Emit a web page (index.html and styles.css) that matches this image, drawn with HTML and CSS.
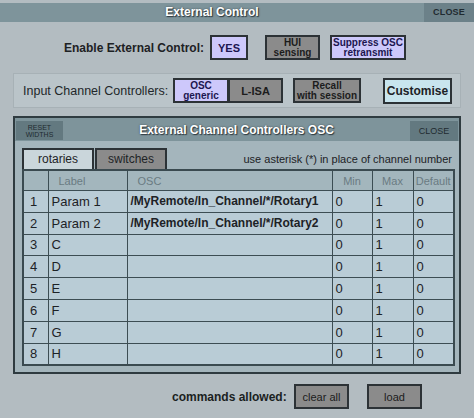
FILE: index.html
```html
<!DOCTYPE html>
<html>
<head>
<meta charset="utf-8">
<link rel="stylesheet" href="styles.css">
</head>
<body>
<div class="win">
  <div class="titlebar">
    <div class="title">External Control</div>
    <div class="close">CLOSE</div>
  </div>

  <div class="enable-row">
    <span class="enable-label">Enable External Control:</span>
    <div class="btn lav yes">YES</div>
    <div class="btn grey hui">HUI<br>sensing</div>
    <div class="btn lav sup">Suppress OSC<br>retransmit</div>
  </div>

  <div class="icc">
    <span class="icc-label">Input Channel Controllers:</span>
    <div class="seg">
      <div class="btn lav osc">OSC<br>generic</div>
      <div class="btn grey lisa">L-ISA</div>
    </div>
    <div class="btn grey recall">Recall<br>with session</div>
    <div class="btn cyan cust">Customise</div>
  </div>

  <div class="panel">
    <div class="ptitlebar">
      <div class="reset">RESET<br>WIDTHS</div>
      <div class="ptitle">External Channel Controllers OSC</div>
      <div class="pclose">CLOSE</div>
    </div>
    <div class="tabrow">
      <div class="tabs">
        <div class="tab on">rotaries</div>
        <div class="tab off">switches</div>
      </div>
      <div class="hint">use asterisk (*) in place of channel number</div>
    </div>
    <table class="grid">
      <colgroup>
        <col class="c-n"><col class="c-l"><col class="c-o"><col class="c-mi"><col class="c-ma"><col class="c-d">
      </colgroup>
      <tr class="hdr"><th></th><th class="lh">Label</th><th class="lh">OSC</th><th>Min</th><th>Max</th><th>Default</th></tr>
      <tr><td>1</td><td>Param 1</td><td class="osc-path">/MyRemote/In_Channel/*/Rotary1</td><td>0</td><td>1</td><td>0</td></tr>
      <tr><td>2</td><td>Param 2</td><td class="osc-path">/MyRemote/In_Channel/*/Rotary2</td><td>0</td><td>1</td><td>0</td></tr>
      <tr><td>3</td><td>C</td><td></td><td>0</td><td>1</td><td>0</td></tr>
      <tr><td>4</td><td>D</td><td></td><td>0</td><td>1</td><td>0</td></tr>
      <tr><td>5</td><td>E</td><td></td><td>0</td><td>1</td><td>0</td></tr>
      <tr><td>6</td><td>F</td><td></td><td>0</td><td>1</td><td>0</td></tr>
      <tr><td>7</td><td>G</td><td></td><td>0</td><td>1</td><td>0</td></tr>
      <tr><td>8</td><td>H</td><td></td><td>0</td><td>1</td><td>0</td></tr>
    </table>
  </div>

  <div class="cmd-row">
    <span class="cmd-label">commands allowed:</span>
    <div class="btn grey clear">clear all</div>
    <div class="btn grey load">load</div>
  </div>
</div>
</body>
</html>
```
FILE: styles.css
```css
html, body {
  margin: 0;
  padding: 0;
}
body {
  width: 474px;
  height: 418px;
  overflow: hidden;
  background: #b3bcc1;
  font-family: "Liberation Sans", Arial, sans-serif;
  color: #1b1f22;
}
.win {
  padding-top: 3px;
}
.titlebar {
  height: 19px;
  background: #7e949b;
  display: flex;
  align-items: stretch;
}
.title {
  flex: 1;
  text-align: center;
  color: #ffffff;
  font-weight: bold;
  font-size: 12px;
  line-height: 19px;
  text-shadow: 1px 1px 1px #2e3a40, 0 0 2px #3d4a50;
}
.close {
  width: 50px;
  background: #6c8189;
  color: #1f2a30;
  font-size: 9px;
  font-weight: bold;
  line-height: 19px;
  text-align: center;
  letter-spacing: 0.2px;
}
.btn {
  box-sizing: border-box;
  flex-shrink: 0;
  border: 2px solid #2c3236;
  display: flex;
  align-items: center;
  justify-content: center;
  text-align: center;
  font-weight: bold;
  font-size: 10px;
  line-height: 10px;
  color: #1d2226;
  white-space: nowrap;
}
.lav { background: #cdc8fb; color: #1c1650; }
.grey { background: #8b8b8b; color: #1c1c1c; }
.cyan { background: #c8e5ee; }

.enable-row {
  display: flex;
  align-items: center;
  margin-top: 13px;
  height: 25px;
}
.enable-label {
  box-sizing: border-box;
  flex-shrink: 0;
  width: 210px;
  padding-right: 6px;
  text-align: right;
  white-space: nowrap;
  font-weight: bold;
  font-size: 12px;
  color: #1d2124;
}
.yes { width: 38px; height: 25px; font-size: 11px; }
.hui { width: 55px; height: 25px; margin-left: 17px; }
.sup { width: 76px; height: 25px; margin-left: 10px; }

.icc {
  margin: 13px 13px 0 13px;
  height: 35px;
  box-sizing: border-box;
  border: 1px solid #a7b1b6;
  background: #bac4c9;
  display: flex;
  align-items: center;
}
.icc-label {
  flex-shrink: 0;
  margin-left: 9px;
  width: 150px;
  white-space: nowrap;
  font-size: 12.5px;
  color: #22272a;
}
.seg { display: flex; flex-shrink: 0; }
.osc { width: 56px; height: 25px; }
.lisa { width: 55px; height: 25px; margin-left: -1px; font-size: 11px; }
.recall { width: 68px; height: 25px; margin-left: 10px; }
.cust { width: 69px; height: 26px; margin-left: 22px; font-size: 12px; }

.panel {
  margin: 8px 13px 0 13px;
  height: 258px;
  box-sizing: border-box;
  border: 2px solid #2f3b40;
  background: #a4b5bc;
  padding: 0 6px 0 7px;
}
.ptitlebar {
  margin: 0 -6px 0 -7px;
  height: 23px;
  background: #7e949b;
  display: flex;
  align-items: center;
  padding: 0 1px 0 1px;
}
.reset {
  width: 47px;
  height: 19px;
  background: #637980;
  color: #1f2b30;
  font-size: 7px;
  line-height: 7px;
  text-align: center;
  display: flex;
  align-items: center;
  justify-content: center;
  margin-top: 2px;
}
.ptitle {
  flex: 1;
  text-align: center;
  color: #ffffff;
  font-weight: bold;
  font-size: 12px;
  text-shadow: 1px 1px 1px #2e3a40, 0 0 2px #3d4a50;
}
.pclose {
  width: 48px;
  height: 20px;
  margin-top: 3px;
  background: #637980;
  color: #1f2b30;
  font-size: 9px;
  line-height: 20px;
  text-align: center;
}
.tabrow {
  display: flex;
  align-items: flex-end;
  justify-content: space-between;
  margin-top: 7px;
  height: 21px;
}
.tabs { display: flex; }
.tab {
  box-sizing: border-box;
  height: 21px;
  border: 2px solid #2c3236;
  border-bottom: none;
  font-size: 12px;
  line-height: 19px;
  text-align: center;
  color: #1e2326;
}
.tab.on { width: 72px; background: #cad6db; }
.tab.off { width: 72px; background: #8b8b8b; margin-left: 1px; }
.hint {
  font-size: 11px;
  color: #1d2226;
  line-height: 19px;
  padding-right: 1px;
  white-space: nowrap;
}
.grid {
  border-collapse: collapse;
  width: 431px;
  table-layout: fixed;
  font-size: 13px;
  background: #b9ccd6;
  border: 2px solid #3a4a50;
}
.grid td, .grid th {
  border: 1px solid #3c4d53;
  height: 20.8px;
  padding: 0 0 0 3px;
  text-align: left;
  white-space: nowrap;
  overflow: hidden;
  color: #1d2226;
}
.grid td:first-child { padding-left: 6px; }
.grid tr.hdr th {
  background: #a3b6bd;
  font-weight: normal;
  font-size: 11px;
  color: #6a7b82;
  height: 19px;
  text-align: center;
  padding: 0;
}
.grid tr.hdr th.lh { text-align: left; padding-left: 10px; }
.c-n { width: 25px; }
.c-l { width: 79px; }
.c-o { width: 205px; }
.c-mi { width: 40px; }
.c-ma { width: 41px; }
.c-d { width: 41px; }
.osc-path { font-weight: bold; font-size: 12px; }

.cmd-row {
  display: flex;
  align-items: center;
  margin-top: 10px;
  height: 25px;
}
.cmd-label {
  flex-shrink: 0;
  margin-left: 172px;
  width: 122px;
  white-space: nowrap;
  font-weight: bold;
  font-size: 12px;
}
.clear { width: 55px; height: 25px; font-weight: normal; font-size: 11px; }
.load { width: 55px; height: 25px; margin-left: 18px; font-weight: normal; font-size: 11px; }
```
